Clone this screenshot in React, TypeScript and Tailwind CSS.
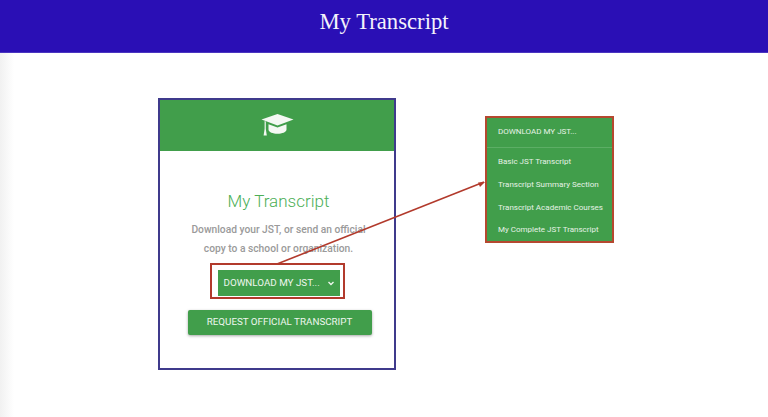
import React from "react";

const items = [
  "Basic JST Transcript",
  "Transcript Summary Section",
  "Transcript Academic Courses",
  "My Complete JST Transcript",
];

function CapIcon() {
  return (
    <svg width="33" height="24" viewBox="0 0 33 24" fill="#f4f8f3">
      <path d="M16.5 1 L32.5 6.6 L16.5 12.6 L0.5 6.6 Z" />
      <path d="M7.5 11.2 L16.5 14.6 L25.5 11.2 V16.6 C25.5 19.4 21 20.8 16.5 20.8 C12 20.8 7.5 19.4 7.5 16.6 Z" />
      <path d="M3.6 8 L4.8 8.4 V16 L5.8 22.6 H2.6 L3.6 16 Z" />
    </svg>
  );
}

export default function App() {
  return (
    <div className="relative w-[768px] h-[417px] overflow-hidden bg-white font-['Roboto',sans-serif]">
      {/* Header */}
      <header className="h-[53px] bg-[#2a0fb5] flex items-center justify-center pb-[7px] border-b border-[#4a35c0]">
        <h1 className="font-['Liberation_Serif',serif] text-[22.7px] text-[#f4f2fb] leading-none">My Transcript</h1>
      </header>

      {/* Left edge shade */}
      <div className="absolute left-0 top-[53px] bottom-0 w-[14px] bg-gradient-to-r from-[#f1f1f1] to-white" />

      <main className="relative flex items-start pl-[158px] pt-[45px]">
        {/* Card */}
        <section className="w-[238px] h-[272px] border-2 border-[#3f3a8c] bg-white flex flex-col items-center">
          <div className="w-full h-[51px] bg-[#419e4b] flex items-center justify-center pb-[2px]">
            <CapIcon />
          </div>
          <h2 className="mt-[39px] ml-[3px] text-[17px] leading-[22px] font-light text-[#4caf57]">My Transcript</h2>
          <p className="mt-[8px] ml-[3px] w-[180px] text-center text-[10.25px] leading-[19px] font-medium text-[#9a9a9a]">
            Download your JST, or send an official copy to a school or organization.
          </p>
          <div className="mt-[5px] w-[135px] h-[36px] border-2 border-[#b23a2c] flex items-end justify-end pr-[3px] pb-[1px]">
            <button className="w-[122px] h-[26px] bg-[#419e4b] text-[#eef6ee] text-[9.8px] flex items-center justify-between pl-[6px] pr-[5px] whitespace-nowrap">
              <span>DOWNLOAD MY JST...</span>
              <svg width="8" height="8" viewBox="0 0 8 8" fill="none" stroke="#eef6ee" strokeWidth="1.4">
                <path d="M1.5 3 L4 5.5 L6.5 3" />
              </svg>
            </button>
          </div>
          <button className="mt-[11px] ml-[5px] w-[184px] h-[25px] rounded-[2px] bg-[#419e4b] text-[#eef6ee] text-[9.8px] shadow-[0_1px_3px_rgba(0,0,0,0.35)]">
            REQUEST OFFICIAL TRANSCRIPT
          </button>
        </section>

        {/* Dropdown callout */}
        <aside className="ml-[89px] mt-[18px] w-[129px] h-[127px] border-2 border-[#b5482f] bg-[#419e4b] text-[#e6f2e6] text-[8px]">
          <div className="h-[30px] flex items-center pl-[11px] pb-[2px] border-b border-[#5cae65]">DOWNLOAD MY JST...</div>
          <ul className="pt-[3px]">
            {items.map((item) => (
              <li key={item} className="h-[22.7px] flex items-center pl-[11px] whitespace-nowrap">
                {item}
              </li>
            ))}
          </ul>
        </aside>
      </main>

      {/* Arrow from button to callout */}
      <svg className="absolute left-0 top-0 pointer-events-none" width="768" height="417" fill="none">
        <path d="M277 264 L484 182" stroke="#b23a2c" strokeWidth="1.6" />
        <path d="M485 182 L478 182.4 L480 187 Z" fill="#b23a2c" />
      </svg>
    </div>
  );
}
